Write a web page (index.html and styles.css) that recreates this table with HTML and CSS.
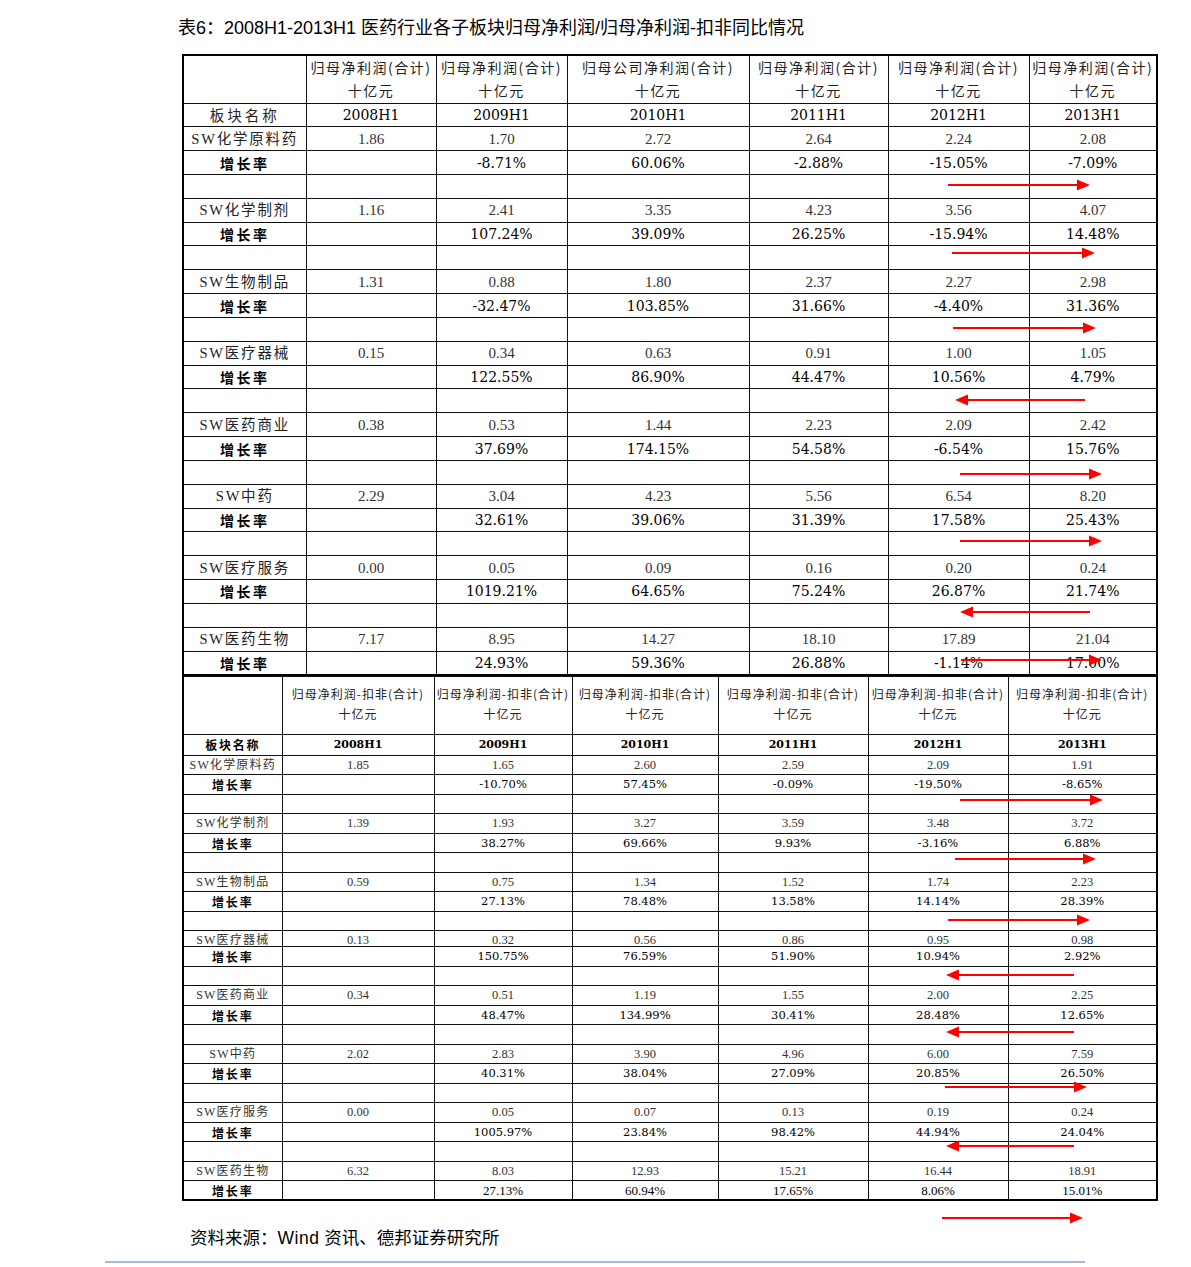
FILE: index.html
```html
<!DOCTYPE html>
<html lang="zh">
<head>
<meta charset="utf-8">
<title>表6</title>
<link rel="stylesheet" href="styles.css">
</head>
<body>
<div class="page">
  <h1 class="title">表6：2008H1-2013H1 医药行业各子板块归母净利润/归母净利润-扣非同比情况</h1>
  <div class="tables">
    <table class="t1">
      <colgroup><col class="k0"><col class="k1"><col class="k2"><col class="k3"><col class="k4"><col class="k5"><col class="k6"></colgroup>
      <tr class="hd"><td></td><td>归母净利润(合计)<br>十亿元</td><td>归母净利润(合计)<br>十亿元</td><td>归母公司净利润(合计)<br>十亿元</td><td>归母净利润(合计)<br>十亿元</td><td>归母净利润(合计)<br>十亿元</td><td>归母净利润(合计)<br>十亿元</td></tr>
      <tr class="yr"><td class="nm">板块名称</td><td>2008H1</td><td>2009H1</td><td>2010H1</td><td>2011H1</td><td>2012H1</td><td>2013H1</td></tr>

      <tr class="v"><td class="nm">SW化学原料药</td><td>1.86</td><td>1.70</td><td>2.72</td><td>2.64</td><td>2.24</td><td>2.08</td></tr>
      <tr class="g"><td class="gl">增长率</td><td></td><td>-8.71%</td><td>60.06%</td><td>-2.88%</td><td>-15.05%</td><td>-7.09%</td></tr>
      <tr class="b"><td></td><td></td><td></td><td></td><td></td><td></td><td></td></tr>

      <tr class="v"><td class="nm">SW化学制剂</td><td>1.16</td><td>2.41</td><td>3.35</td><td>4.23</td><td>3.56</td><td>4.07</td></tr>
      <tr class="g"><td class="gl">增长率</td><td></td><td>107.24%</td><td>39.09%</td><td>26.25%</td><td>-15.94%</td><td>14.48%</td></tr>
      <tr class="b"><td></td><td></td><td></td><td></td><td></td><td></td><td></td></tr>

      <tr class="v"><td class="nm">SW生物制品</td><td>1.31</td><td>0.88</td><td>1.80</td><td>2.37</td><td>2.27</td><td>2.98</td></tr>
      <tr class="g"><td class="gl">增长率</td><td></td><td>-32.47%</td><td>103.85%</td><td>31.66%</td><td>-4.40%</td><td>31.36%</td></tr>
      <tr class="b"><td></td><td></td><td></td><td></td><td></td><td></td><td></td></tr>

      <tr class="v"><td class="nm">SW医疗器械</td><td>0.15</td><td>0.34</td><td>0.63</td><td>0.91</td><td>1.00</td><td>1.05</td></tr>
      <tr class="g"><td class="gl">增长率</td><td></td><td>122.55%</td><td>86.90%</td><td>44.47%</td><td>10.56%</td><td>4.79%</td></tr>
      <tr class="b"><td></td><td></td><td></td><td></td><td></td><td></td><td></td></tr>

      <tr class="v"><td class="nm">SW医药商业</td><td>0.38</td><td>0.53</td><td>1.44</td><td>2.23</td><td>2.09</td><td>2.42</td></tr>
      <tr class="g"><td class="gl">增长率</td><td></td><td>37.69%</td><td>174.15%</td><td>54.58%</td><td>-6.54%</td><td>15.76%</td></tr>
      <tr class="b"><td></td><td></td><td></td><td></td><td></td><td></td><td></td></tr>

      <tr class="v"><td class="nm">SW中药</td><td>2.29</td><td>3.04</td><td>4.23</td><td>5.56</td><td>6.54</td><td>8.20</td></tr>
      <tr class="g"><td class="gl">增长率</td><td></td><td>32.61%</td><td>39.06%</td><td>31.39%</td><td>17.58%</td><td>25.43%</td></tr>
      <tr class="b"><td></td><td></td><td></td><td></td><td></td><td></td><td></td></tr>

      <tr class="v"><td class="nm">SW医疗服务</td><td>0.00</td><td>0.05</td><td>0.09</td><td>0.16</td><td>0.20</td><td>0.24</td></tr>
      <tr class="g"><td class="gl">增长率</td><td></td><td>1019.21%</td><td>64.65%</td><td>75.24%</td><td>26.87%</td><td>21.74%</td></tr>
      <tr class="b"><td></td><td></td><td></td><td></td><td></td><td></td><td></td></tr>

      <tr class="v"><td class="nm">SW医药生物</td><td>7.17</td><td>8.95</td><td>14.27</td><td>18.10</td><td>17.89</td><td>21.04</td></tr>
      <tr class="g"><td class="gl">增长率</td><td></td><td>24.93%</td><td>59.36%</td><td>26.88%</td><td>-1.14%</td><td>17.00%</td></tr>
    </table>

    <table class="t2">
      <colgroup><col class="m0"><col class="m1"><col class="m2"><col class="m3"><col class="m4"><col class="m5"><col class="m6"></colgroup>
      <tr class="hd"><td></td><td>归母净利润-扣非(合计)<br>十亿元</td><td>归母净利润-扣非(合计)<br>十亿元</td><td>归母净利润-扣非(合计)<br>十亿元</td><td>归母净利润-扣非(合计)<br>十亿元</td><td>归母净利润-扣非(合计)<br>十亿元</td><td>归母净利润-扣非(合计)<br>十亿元</td></tr>
      <tr class="yr"><td class="gl">板块名称</td><td>2008H1</td><td>2009H1</td><td>2010H1</td><td>2011H1</td><td>2012H1</td><td>2013H1</td></tr>

      <tr class="v"><td class="nm">SW化学原料药</td><td>1.85</td><td>1.65</td><td>2.60</td><td>2.59</td><td>2.09</td><td>1.91</td></tr>
      <tr class="g"><td class="gl">增长率</td><td></td><td>-10.70%</td><td>57.45%</td><td>-0.09%</td><td>-19.50%</td><td>-8.65%</td></tr>
      <tr class="b"><td></td><td></td><td></td><td></td><td></td><td></td><td></td></tr>

      <tr class="v"><td class="nm">SW化学制剂</td><td>1.39</td><td>1.93</td><td>3.27</td><td>3.59</td><td>3.48</td><td>3.72</td></tr>
      <tr class="g"><td class="gl">增长率</td><td></td><td>38.27%</td><td>69.66%</td><td>9.93%</td><td>-3.16%</td><td>6.88%</td></tr>
      <tr class="b"><td></td><td></td><td></td><td></td><td></td><td></td><td></td></tr>

      <tr class="v"><td class="nm">SW生物制品</td><td>0.59</td><td>0.75</td><td>1.34</td><td>1.52</td><td>1.74</td><td>2.23</td></tr>
      <tr class="g"><td class="gl">增长率</td><td></td><td>27.13%</td><td>78.48%</td><td>13.58%</td><td>14.14%</td><td>28.39%</td></tr>
      <tr class="b"><td></td><td></td><td></td><td></td><td></td><td></td><td></td></tr>

      <tr class="v cut"><td class="nm">SW医疗器械</td><td>0.13</td><td>0.32</td><td>0.56</td><td>0.86</td><td>0.95</td><td>0.98</td></tr>
      <tr class="g"><td class="gl">增长率</td><td></td><td>150.75%</td><td>76.59%</td><td>51.90%</td><td>10.94%</td><td>2.92%</td></tr>
      <tr class="b"><td></td><td></td><td></td><td></td><td></td><td></td><td></td></tr>

      <tr class="v"><td class="nm">SW医药商业</td><td>0.34</td><td>0.51</td><td>1.19</td><td>1.55</td><td>2.00</td><td>2.25</td></tr>
      <tr class="g"><td class="gl">增长率</td><td></td><td>48.47%</td><td>134.99%</td><td>30.41%</td><td>28.48%</td><td>12.65%</td></tr>
      <tr class="b"><td></td><td></td><td></td><td></td><td></td><td></td><td></td></tr>

      <tr class="v"><td class="nm">SW中药</td><td>2.02</td><td>2.83</td><td>3.90</td><td>4.96</td><td>6.00</td><td>7.59</td></tr>
      <tr class="g"><td class="gl">增长率</td><td></td><td>40.31%</td><td>38.04%</td><td>27.09%</td><td>20.85%</td><td>26.50%</td></tr>
      <tr class="b"><td></td><td></td><td></td><td></td><td></td><td></td><td></td></tr>

      <tr class="v"><td class="nm">SW医疗服务</td><td>0.00</td><td>0.05</td><td>0.07</td><td>0.13</td><td>0.19</td><td>0.24</td></tr>
      <tr class="g"><td class="gl">增长率</td><td></td><td>1005.97%</td><td>23.84%</td><td>98.42%</td><td>44.94%</td><td>24.04%</td></tr>
      <tr class="b"><td></td><td></td><td></td><td></td><td></td><td></td><td></td></tr>

      <tr class="v nar"><td class="nm">SW医药生物</td><td>6.32</td><td>8.03</td><td>12.93</td><td>15.21</td><td>16.44</td><td>18.91</td></tr>
      <tr class="g nar"><td class="gl">增长率</td><td></td><td>27.13%</td><td>60.94%</td><td>17.65%</td><td>8.06%</td><td>15.01%</td></tr>
    </table>
  </div>

  <p class="source">资料来源：<span class="wind">Wind</span> 资讯、德邦证券研究所</p>
  <div class="rule"></div>

  <svg class="arrows" width="1191" height="1267" viewBox="0 0 1191 1267" aria-hidden="true">
    <g stroke="#ff0000" stroke-width="2" fill="none">
      <line x1="948" y1="185" x2="1078" y2="185"/>
      <line x1="952" y1="253" x2="1083" y2="253"/>
      <line x1="953" y1="328" x2="1084" y2="328"/>
      <line x1="967" y1="400" x2="1085" y2="400"/>
      <line x1="960" y1="474" x2="1090" y2="474"/>
      <line x1="960" y1="541" x2="1090" y2="541"/>
      <line x1="972" y1="612" x2="1090" y2="612"/>
      <line x1="961" y1="660" x2="1090" y2="660"/>
      <line x1="960" y1="800" x2="1091" y2="800"/>
      <line x1="955" y1="859" x2="1084" y2="859"/>
      <line x1="948" y1="920" x2="1078" y2="920"/>
      <line x1="958" y1="975" x2="1074" y2="975"/>
      <line x1="958" y1="1032" x2="1074" y2="1032"/>
      <line x1="945" y1="1087" x2="1075" y2="1087"/>
      <line x1="958" y1="1146" x2="1074" y2="1146"/>
      <line x1="942" y1="1218" x2="1071" y2="1218"/>
    </g>
    <g fill="#ff0000">
      <polygon points="1090,185 1077,179.5 1077,190.5"/>
      <polygon points="1095,253 1082,247.5 1082,258.5"/>
      <polygon points="1096,328 1083,322.5 1083,333.5"/>
      <polygon points="955,400 968,394.5 968,405.5"/>
      <polygon points="1102,474 1089,468.5 1089,479.5"/>
      <polygon points="1102,541 1089,535.5 1089,546.5"/>
      <polygon points="960,612 973,606.5 973,617.5"/>
      <polygon points="1102,660 1089,654.5 1089,665.5"/>
      <polygon points="1103,800 1090,794.5 1090,805.5"/>
      <polygon points="1096,859 1083,853.5 1083,864.5"/>
      <polygon points="1090,920 1077,914.5 1077,925.5"/>
      <polygon points="946,975 959,969.5 959,980.5"/>
      <polygon points="946,1032 959,1026.5 959,1037.5"/>
      <polygon points="1087,1087 1074,1081.5 1074,1092.5"/>
      <polygon points="946,1146 959,1140.5 959,1151.5"/>
      <polygon points="1083,1218 1070,1212.5 1070,1223.5"/>
    </g>
  </svg>
</div>
</body>
</html>
```

FILE: styles.css
```css
html, body {
  margin: 0;
  padding: 0;
  background: #ffffff;
}

.page {
  position: relative;
  width: 1191px;
  height: 1267px;
  overflow: hidden;
  color: #000;
  font-family: "Liberation Serif", "Noto Sans CJK SC", serif;
}

.title {
  margin: 0;
  padding: 17px 0 0 178px;
  font-family: "Liberation Sans", "Noto Sans CJK SC", sans-serif;
  font-weight: normal;
  font-size: 18px;
  line-height: 23px;
  color: #000;
  white-space: nowrap;
}

.tables {
  margin: 14px 0 0 182px;
  width: 974px;
}

table {
  border-collapse: collapse;
  table-layout: fixed;
  width: 974px;
}

td {
  border: 1px solid #111;
  padding: 0;
  text-align: center;
  vertical-align: middle;
  white-space: nowrap;
  overflow: hidden;
}

/* ---------- top table ---------- */
.t1 {
  border: 2px solid #000;
}
.t1 .k0 { width: 123px; }
.t1 .k1 { width: 130px; }
.t1 .k2 { width: 131px; }
.t1 .k3 { width: 182px; }
.t1 .k4 { width: 139px; }
.t1 .k5 { width: 141px; }
.t1 .k6 { width: 128px; }

.t1 tr { height: 23.83px; }
.t1 td {
  font-size: 14px;
  line-height: 18px;
}
.t1 .hd { height: 48px; }
.t1 .hd td {
  font-family: "Noto Sans CJK SC", sans-serif;
  font-size: 14px;
  line-height: 23px;
  letter-spacing: 1.5px;
  color: #222;
}
.t1 .yr td {
  font-family: "DejaVu Serif", serif;
  font-size: 14px;
  color: #000;
}
.t1 .yr td.nm {
  font-family: "Noto Sans CJK SC", sans-serif;
  letter-spacing: 3px;
  color: #222;
}
.t1 .v td {
  font-family: "Liberation Serif", serif;
  font-size: 15px;
  color: #333;
}
.t1 td.nm {
  font-family: "Liberation Serif", "Noto Sans CJK SC", serif;
  font-size: 14.5px;
  letter-spacing: 1.8px;
  color: #222;
}
.t1 .g td {
  font-family: "DejaVu Serif", serif;
  font-size: 14px;
  color: #000;
}
.t1 .g td.gl {
  font-family: "Noto Sans CJK SC", sans-serif;
  font-weight: bold;
  font-size: 14px;
  letter-spacing: 2.5px;
}

/* ---------- bottom table ---------- */
.t2 {
  border: 2px solid #000;
  border-top-width: 1px;
}
.t2 .m0 { width: 99px; }
.t2 .m1 { width: 152px; }
.t2 .m2 { width: 138px; }
.t2 .m3 { width: 146px; }
.t2 .m4 { width: 150px; }
.t2 .m5 { width: 140px; }
.t2 .m6 { width: 149px; }

.t2 tr { height: 19.5px; }
.t2 td {
  font-size: 12px;
  line-height: 15px;
}
.t2 .hd { height: 58px; }
.t2 .hd td {
  font-family: "Noto Sans CJK SC", sans-serif;
  font-size: 12px;
  line-height: 20px;
  letter-spacing: 1px;
  color: #222;
  padding-bottom: 2px;
}
.t2 .yr { height: 21px; }
.t2 .yr td {
  font-family: "DejaVu Serif", serif;
  font-weight: bold;
  font-size: 11px;
}
.t2 .v td {
  font-family: "Liberation Serif", serif;
  font-size: 12.5px;
  color: #333;
}
.t2 td.nm {
  font-family: "Liberation Serif", "Noto Sans CJK SC", serif;
  font-size: 12px;
  letter-spacing: 1.2px;
  color: #333;
}
.t2 .g td {
  font-family: "DejaVu Serif", serif;
  font-size: 11.5px;
  color: #000;
}
.t2 td.gl {
  font-family: "Noto Sans CJK SC", sans-serif;
  font-weight: bold;
  font-size: 12px;
  letter-spacing: 1.8px;
  color: #000;
}
.t2 .cut { height: 16px; }
.t2 .cut td {
  line-height: 12px;
  vertical-align: bottom;
}
.t2 .nar td {
  font-stretch: condensed;
}
.t2 .nar.g td {
  font-family: "Liberation Serif", serif;
  font-size: 13px;
}
.t2 .nar.g td.gl {
  font-family: "Noto Sans CJK SC", sans-serif;
  font-size: 12px;
}

/* ---------- footer ---------- */
.source {
  margin: 25px 0 0 190px;
  font-family: "Liberation Sans", "Noto Sans CJK SC", sans-serif;
  font-size: 17.5px;
  line-height: 24px;
  color: #000;
  white-space: nowrap;
}
.wind {
  letter-spacing: 0.5px;
}

.rule {
  margin: 11px 0 0 105px;
  width: 980px;
  height: 2px;
  background: #a9bad6;
}

.arrows {
  position: absolute;
  left: 0;
  top: 0;
  pointer-events: none;
}
```
